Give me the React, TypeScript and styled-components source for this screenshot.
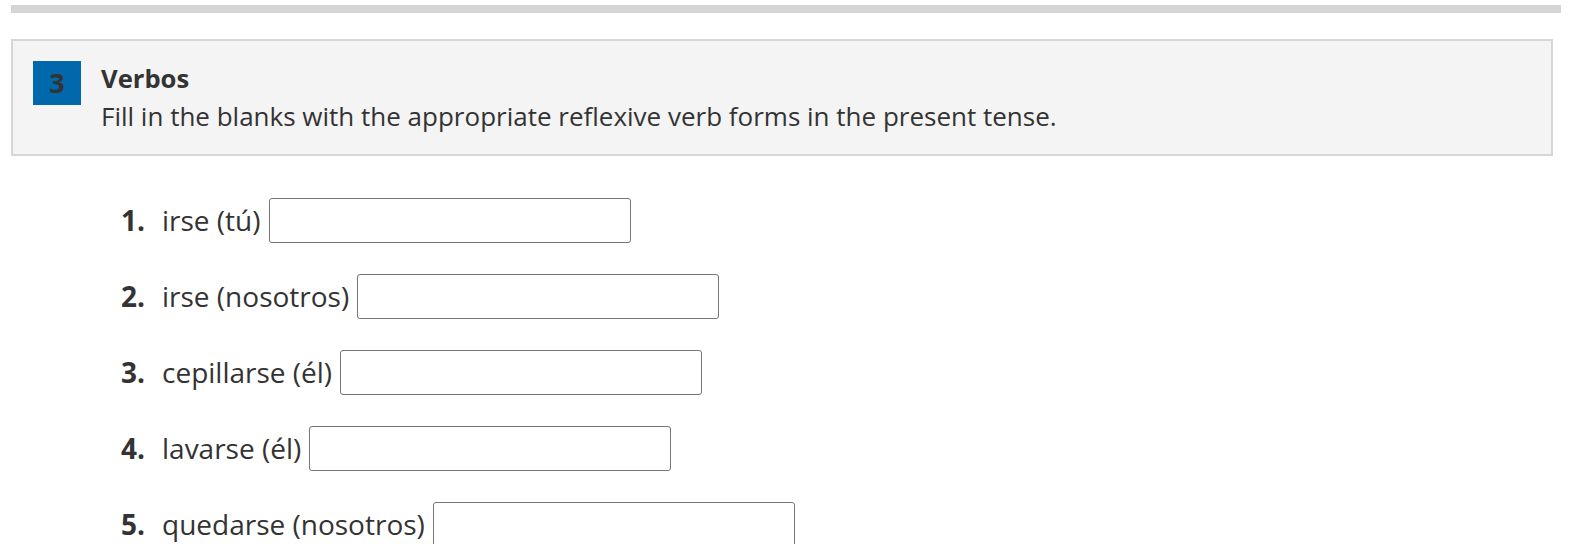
import React from 'react';
import styled, { createGlobalStyle } from 'styled-components';

const GlobalStyle = createGlobalStyle`
  html, body {
    margin: 0;
    padding: 0;
    background: #ffffff;
  }
  body {
    font-family: 'Open Sans', 'Noto Sans', sans-serif;
    color: #333333;
  }
`;

const items = [
  { n: 1, label: 'irse (tú)' },
  { n: 2, label: 'irse (nosotros)' },
  { n: 3, label: 'cepillarse (él)' },
  { n: 4, label: 'lavarse (él)' },
  { n: 5, label: 'quedarse (nosotros)' },
];

export default function App() {
  return (
    <>
      <GlobalStyle />
      <St.Page>
        <St.Rule />
        <St.Header>
          <St.Badge>3</St.Badge>
          <St.HeadText>
            <St.Title>Verbos</St.Title>
            <St.Instructions>
              Fill in the blanks with the appropriate reflexive verb forms in the present tense.
            </St.Instructions>
          </St.HeadText>
        </St.Header>
        <St.List>
          {items.map((it) => (
            <St.Item key={it.n}>
              <St.Num>{it.n}.</St.Num>
              <St.Label>{it.label}</St.Label>
              <St.Blank type="text" aria-label={it.label} />
            </St.Item>
          ))}
        </St.List>
      </St.Page>
    </>
  );
}

const Page = styled.div`
  padding: 5px 40px 0 11px;
  display: flex;
  flex-direction: column;
`;

const Rule = styled.div`
  height: 8px;
  background: #d5d5d5;
  margin-right: -8px;
`;

const Header = styled.div`
  margin-top: 26px;
  border: 2px solid #d6d6d6;
  background: #f4f4f4;
  padding: 20px 20px 19px 20px;
  display: flex;
  align-items: flex-start;
  gap: 20px;
`;

const Badge = styled.div`
  flex: 0 0 48px;
  height: 44px;
  background: #0068ab;
  color: #333333;
  font-weight: 700;
  font-size: 27px;
  line-height: 44px;
  text-align: center;
`;

const HeadText = styled.div`
  display: flex;
  flex-direction: column;
`;

const Title = styled.div`
  font-weight: 700;
  font-size: 25.6px;
  line-height: 36px;
`;

const Instructions = styled.div`
  font-size: 26px;
  line-height: 38px;
`;

const List = styled.ol`
  list-style: none;
  margin: 42px 0 0 0;
  padding: 0 0 0 110px;
  display: flex;
  flex-direction: column;
  gap: 32px;
`;

const Item = styled.li`
  display: flex;
  align-items: center;
  height: 44px;
  font-size: 28px;
`;

const Num = styled.span`
  flex: 0 0 41px;
  font-weight: 700;
`;

const Label = styled.span``;

const Blank = styled.input`
  box-sizing: border-box;
  margin-left: 8px;
  width: 362px;
  height: 45px;
  border: 1.5px solid #767676;
  border-radius: 3px;
  background: #ffffff;
  font: inherit;
  padding: 0 8px;
`;

const St = {
  Page,
  Rule,
  Header,
  Badge,
  HeadText,
  Title,
  Instructions,
  List,
  Item,
  Num,
  Label,
  Blank,
};
